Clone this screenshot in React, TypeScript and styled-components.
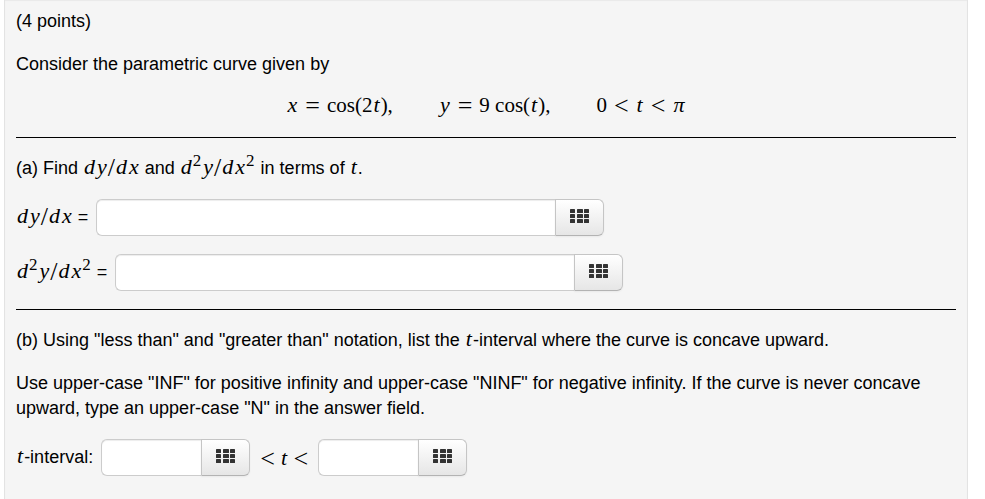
import React from "react";
import styled, { createGlobalStyle } from "styled-components";

const GlobalStyle = createGlobalStyle`
  *, *::before, *::after { box-sizing: border-box; }
  body {
    margin: 0;
    background: #fff;
    color: #000;
    font: 18px/25px "Liberation Sans", Arial, sans-serif;
  }
`;

const Problem = styled.main`
  display: flex;
  flex-direction: column;
  gap: 18px;
  min-height: 100vh;
  margin: 0 17px 0 4px;
  padding: 9px 11px 23px;
  background: #f5f5f5;
  border: solid #e3e3e3;
  border-width: 0 1px;
  box-shadow: inset 0 1px 1px rgba(0, 0, 0, 0.05);
`;

const Text = styled.p`
  margin: 0;
`;

const Equation = styled.div`
  display: flex;
  flex-wrap: wrap;
  justify-content: center;
  gap: 46px;
  padding-bottom: 4px;
  line-height: 24px;
`;

const Divider = styled.hr`
  align-self: stretch;
  margin: 0;
  border: 0;
  border-top: 1px solid #000;
`;

const Formula = styled.span`
  font-family: "Liberation Serif", "Times New Roman", serif;
  font-size: 21px;
  line-height: 20px;
  white-space: nowrap;
`;

const Var = styled.i`
  padding: 0 1px;
  font-size: 22px;
`;

const Rel = styled.span`
  margin: 0 7px;
  font-size: 26px;
  line-height: 0;
  vertical-align: -2px;
`;

const Slash = styled.span`
  font-size: 26px;
  line-height: 0;
  vertical-align: -2px;
`;

const Power = styled.sup`
  padding-right: 1px;
  font-size: 17px;
  line-height: 0;
`;

const Row = styled.div`
  display: flex;
  flex-wrap: wrap;
  align-items: center;
  gap: 8px;
`;

const Bounds = styled(Formula)`
  margin: 0 2px;
`;

const Group = styled.div<{ $wide?: boolean }>`
  display: flex;
  width: ${(p) => (p.$wide ? 508 : 149)}px;
  max-width: 100%;
  height: 37px;
`;

const Field = styled.input`
  flex: 1;
  min-width: 0;
  padding: 4px 8px;
  border: 1px solid #ccc;
  border-right: 0;
  border-radius: 6px 0 0 6px;
  background: #fff;
  box-shadow: inset 0 1px 1px rgba(0, 0, 0, 0.075);
  font: inherit;
`;

const PadButton = styled.button`
  display: flex;
  justify-content: center;
  width: 49px;
  padding: 9px 0;
  border: 1px solid #c5c5c5;
  border-bottom-color: #b3b3b3;
  border-radius: 0 6px 6px 0;
  background: linear-gradient(#fff, #e6e6e6);
  box-shadow: inset 0 1px 0 rgba(255, 255, 255, 0.2), 0 1px 2px rgba(0, 0, 0, 0.05);
`;

const PadIcon = () => (
  <svg width="19" height="14" viewBox="0 0 19 14" fill="#333" aria-hidden="true">
    {[0, 5, 10].map((y) =>
      [0, 7, 14].map((x) => <rect key={`${x}-${y}`} x={x} y={y} width={x === 7 ? 6 : 5} height="4" rx="0.6" />)
    )}
  </svg>
);

const AnswerField = ({ id, label, wide }: { id: string; label: string; wide?: boolean }) => (
  <Group $wide={wide}>
    <Field id={id} type="text" aria-label={label} />
    <PadButton type="button" aria-label={`Equation editor for ${label}`}>
      <PadIcon />
    </PadButton>
  </Group>
);

const FirstDerivative = () => (
  <Formula>
    <Var>d</Var><Var>y</Var><Slash>/</Slash><Var>d</Var><Var>x</Var>
  </Formula>
);

const SecondDerivative = () => (
  <Formula>
    <Var>d</Var><Power>2</Power><Var>y</Var><Slash>/</Slash><Var>d</Var><Var>x</Var><Power>2</Power>
  </Formula>
);

const T = () => <Formula><Var>t</Var></Formula>;

export default function App() {
  return (
    <>
      <GlobalStyle />
      <Problem>
        <Text>(4 points)</Text>
        <Text>Consider the parametric curve given by</Text>
        <Equation>
          <Formula><Var>x</Var><Rel>=</Rel>cos(2<Var>t</Var>),</Formula>
          <Formula><Var>y</Var><Rel>=</Rel>9 cos(<Var>t</Var>),</Formula>
          <Formula>0<Rel>&lt;</Rel><Var>t</Var><Rel>&lt;</Rel><Var>π</Var></Formula>
        </Equation>
        <Divider />
        <Text>(a) Find <FirstDerivative /> and <SecondDerivative /> in terms of <T />.</Text>
        <Row>
          <label htmlFor="first"><FirstDerivative /> =</label>
          <AnswerField id="first" label="dy/dx" wide />
        </Row>
        <Row>
          <label htmlFor="second"><SecondDerivative /> =</label>
          <AnswerField id="second" label="second derivative" wide />
        </Row>
        <Divider />
        <Text>
          (b) Using "less than" and "greater than" notation, list the <T />-interval where the curve is concave upward.
        </Text>
        <Text>
          Use upper-case "INF" for positive infinity and upper-case "NINF" for negative infinity. If the curve is never
          concave upward, type an upper-case "N" in the answer field.
        </Text>
        <Row>
          <label htmlFor="lower"><T />-interval:</label>
          <AnswerField id="lower" label="lower bound" />
          <Bounds><Slash>&lt;</Slash> <Var>t</Var> <Slash>&lt;</Slash></Bounds>
          <AnswerField id="upper" label="upper bound" />
        </Row>
      </Problem>
    </>
  );
}
